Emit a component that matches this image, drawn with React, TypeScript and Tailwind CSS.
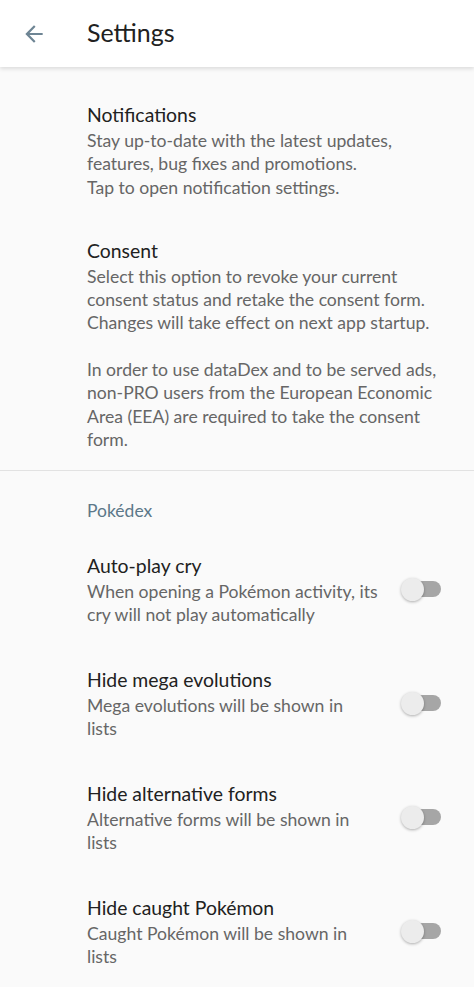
import React from 'react';

const font = { fontFamily: 'Lato, "Noto Sans", sans-serif' };

const Toggle = () => (
    <div className="relative w-[40px] h-[24px] flex-none flex items-center">
        <div className="absolute left-[6px] right-0 h-[16px] rounded-full bg-[#a6a6a6]" />
        <div className="absolute left-0 w-[23px] h-[23px] rounded-full bg-[#ececec] shadow-[0_1px_3px_rgba(0,0,0,0.3)]" />
    </div>
);

const Summary = ({ lines }: { lines: string[] }) => (
    <>
        {lines.map((l, i) => (
            <div key={i} className="text-[17.6px] leading-[23.3px] text-[#666666] whitespace-nowrap min-h-[23.3px]">{l}</div>
        ))}
    </>
);

const TextPref = ({ title, lines }: { title: string; lines: string[] }) => (
    <div className="pl-[87px] pr-4">
        <div className="text-[19.4px] leading-[28px] text-[#212121]">{title}</div>
        <Summary lines={lines} />
    </div>
);

const SwitchPref = ({ title, lines }: { title: string; lines: string[] }) => (
    <div className="flex items-center pl-[87px] pr-[33px] h-[114px]">
        <div className="flex-1 min-w-0">
            <div className="text-[19.4px] leading-[28px] text-[#212121]">{title}</div>
            <Summary lines={lines} />
        </div>
        <Toggle />
    </div>
);

export default function App() {
    return (
        <div className="w-[474px] h-[987px] bg-[#fafafa] overflow-hidden" style={font}>
            {/* Toolbar */}
            <div className="relative z-10 h-[67px] bg-white flex items-center shadow-[0_2px_4px_rgba(0,0,0,0.12)]">
                <div className="w-[87px] pl-[21px] flex items-center">
                    <svg width="26" height="26" viewBox="0 0 24 24" fill="#6e8594">
                        <path d="M20 11H7.83l5.59-5.59L12 4l-8 8 8 8 1.41-1.41L7.83 13H20v-2z" />
                    </svg>
                </div>
                <div className="text-[25px] text-[#212121] pb-[1px]">Settings</div>
            </div>

            <div className="pt-[34px]">
                <TextPref
                    title="Notifications"
                    lines={[
                        'Stay up-to-date with the latest updates,',
                        'features, bug fixes and promotions.',
                        'Tap to open notification settings.',
                    ]}
                />
                <div className="h-[38px]" />
                <TextPref
                    title="Consent"
                    lines={[
                        'Select this option to revoke your current',
                        'consent status and retake the consent form.',
                        'Changes will take effect on next app startup.',
                        '',
                        'In order to use dataDex and to be served ads,',
                        'non-PRO users from the European Economic',
                        'Area (EEA) are required to take the consent',
                        'form.',
                    ]}
                />
                <div className="h-[19px]" />
                <div className="h-px bg-[#e2e2e2]" />

                <div className="pl-[87px] pt-[29px] pb-[10px] text-[17.5px] leading-[22px] text-[#5c7889]">Pokédex</div>

                <SwitchPref title="Auto-play cry" lines={['When opening a Pokémon activity, its', 'cry will not play automatically']} />
                <SwitchPref title="Hide mega evolutions" lines={['Mega evolutions will be shown in', 'lists']} />
                <SwitchPref title="Hide alternative forms" lines={['Alternative forms will be shown in', 'lists']} />
                <SwitchPref title="Hide caught Pokémon" lines={['Caught Pokémon will be shown in', 'lists']} />
            </div>
        </div>
    );
}
